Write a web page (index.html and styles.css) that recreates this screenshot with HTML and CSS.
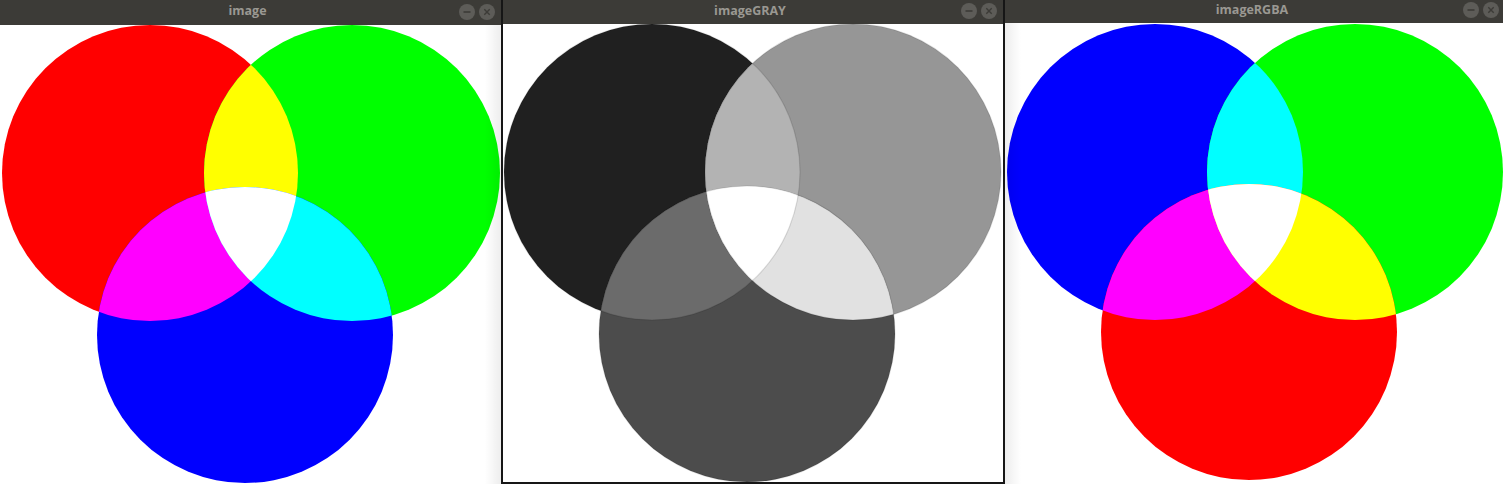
FILE: index.html
```html
<!DOCTYPE html>
<html>
<head>
<meta charset="utf-8">
<link rel="stylesheet" href="styles.css">
</head>
<body>
<div class="desktop">
  <div class="win win1">
    <div class="titlebar">
      <span class="title">image</span>
      <div class="btns">
        <svg class="btn" viewBox="0 0 16 16"><circle cx="8" cy="8" r="8" fill="#5d5c58"/><path d="M4.5 8h7" stroke="#3c3b37" stroke-width="1.6"/></svg>
        <svg class="btn" viewBox="0 0 16 16"><circle cx="8" cy="8" r="8" fill="#5d5c58"/><path d="M5.3 5.3l5.4 5.4M10.7 5.3l-5.4 5.4" stroke="#3c3b37" stroke-width="1.4"/></svg>
      </div>
    </div>
    <div class="content shade-right">
      <svg class="pic" width="501" height="459" viewBox="0 0 501 459">
        <defs>
          <clipPath id="a1"><circle cx="150" cy="148" r="148"/></clipPath>
          <clipPath id="b1"><circle cx="352" cy="148" r="148"/></clipPath>
        </defs>
        <circle cx="150" cy="148" r="148" fill="#ff0000"/>
        <circle cx="352" cy="148" r="148" fill="#00ff00"/>
        <circle cx="245" cy="310" r="148" fill="#0000ff"/>
        <circle cx="352" cy="148" r="148" fill="#ffff00" clip-path="url(#a1)"/>
        <circle cx="245" cy="310" r="148" fill="#ff00ff" clip-path="url(#a1)"/>
        <circle cx="245" cy="310" r="148" fill="#00ffff" clip-path="url(#b1)"/>
        <g clip-path="url(#a1)"><circle cx="245" cy="310" r="148" fill="#ffffff" clip-path="url(#b1)"/></g>
      </svg>
    </div>
  </div>

  <div class="win win2">
    <div class="titlebar">
      <span class="title">imageGRAY</span>
      <div class="btns">
        <svg class="btn" viewBox="0 0 16 16"><circle cx="8" cy="8" r="8" fill="#5d5c58"/><path d="M4.5 8h7" stroke="#3c3b37" stroke-width="1.6"/></svg>
        <svg class="btn" viewBox="0 0 16 16"><circle cx="8" cy="8" r="8" fill="#5d5c58"/><path d="M5.3 5.3l5.4 5.4M10.7 5.3l-5.4 5.4" stroke="#3c3b37" stroke-width="1.4"/></svg>
      </div>
    </div>
    <div class="content">
      <svg class="pic" width="500" height="458" viewBox="0 0 500 458">
        <defs>
          <clipPath id="a2"><circle cx="149" cy="148" r="148"/></clipPath>
          <clipPath id="b2"><circle cx="350" cy="148" r="148"/></clipPath>
        </defs>
        <circle cx="149" cy="148" r="148" fill="#202020"/>
        <circle cx="350" cy="148" r="148" fill="#969696"/>
        <circle cx="244" cy="310" r="148" fill="#4c4c4c"/>
        <circle cx="350" cy="148" r="148" fill="#b3b3b3" clip-path="url(#a2)"/>
        <circle cx="244" cy="310" r="148" fill="#6b6b6b" clip-path="url(#a2)"/>
        <circle cx="244" cy="310" r="148" fill="#e1e1e1" clip-path="url(#b2)"/>
        <g clip-path="url(#a2)"><circle cx="244" cy="310" r="148" fill="#ffffff" clip-path="url(#b2)"/></g>
        <g fill="none" stroke="rgba(0,0,0,0.12)" stroke-width="1.2">
          <circle cx="149" cy="148" r="148"/>
          <circle cx="350" cy="148" r="148"/>
          <circle cx="244" cy="310" r="148"/>
        </g>
      </svg>
    </div>
  </div>

  <div class="win win3">
    <div class="titlebar">
      <span class="title">imageRGBA</span>
      <div class="btns">
        <svg class="btn" viewBox="0 0 16 16"><circle cx="8" cy="8" r="8" fill="#5d5c58"/><path d="M4.5 8h7" stroke="#3c3b37" stroke-width="1.6"/></svg>
        <svg class="btn" viewBox="0 0 16 16"><circle cx="8" cy="8" r="8" fill="#5d5c58"/><path d="M5.3 5.3l5.4 5.4M10.7 5.3l-5.4 5.4" stroke="#3c3b37" stroke-width="1.4"/></svg>
      </div>
    </div>
    <div class="content shade-left">
      <svg class="pic" width="498" height="461" viewBox="0 0 498 461">
        <defs>
          <clipPath id="a3"><circle cx="150" cy="149" r="148"/></clipPath>
          <clipPath id="b3"><circle cx="350" cy="149" r="148"/></clipPath>
        </defs>
        <circle cx="150" cy="149" r="148" fill="#0000ff"/>
        <circle cx="350" cy="149" r="148" fill="#00ff00"/>
        <circle cx="244" cy="309" r="148" fill="#ff0000"/>
        <circle cx="350" cy="149" r="148" fill="#00ffff" clip-path="url(#a3)"/>
        <circle cx="244" cy="309" r="148" fill="#ff00ff" clip-path="url(#a3)"/>
        <circle cx="244" cy="309" r="148" fill="#ffff00" clip-path="url(#b3)"/>
        <g clip-path="url(#a3)"><circle cx="244" cy="309" r="148" fill="#ffffff" clip-path="url(#b3)"/></g>
      </svg>
    </div>
  </div>
</div>
</body>
</html>
```

FILE: styles.css
```css
* { box-sizing: border-box; }

html, body {
  margin: 0;
  padding: 0;
  background: #2a2a28;
  overflow: hidden;
}

.desktop {
  display: flex;
  width: 1503px;
  height: 484px;
}

.win {
  display: flex;
  flex-direction: column;
  height: 484px;
  background: #ffffff;
}

.win1 { width: 501px; }
.win2 {
  width: 504px;
  border: 2px solid #161616;
  border-top: none;
}
.win3 { width: 498px; }

.titlebar {
  position: relative;
  display: flex;
  align-items: center;
  justify-content: center;
  height: 25px;
  flex: 0 0 auto;
  background: #3c3b37;
  padding-right: 6px;
}
.win2 .titlebar { height: 24px; }
.win3 .titlebar { height: 23px; padding-right: 4px; }

.title {
  font-family: "Open Sans", "DejaVu Sans", sans-serif;
  font-weight: 700;
  font-size: 12.5px;
  color: #9a9892;
  letter-spacing: 0;
  line-height: 1;
  margin-top: -2px;
}

.btns {
  position: absolute;
  right: 6px;
  top: 4px;
  display: flex;
  gap: 4px;
}
.win2 .btns { top: 3px; }
.win3 .btns { right: 4px; top: 2px; }

.btn {
  width: 16px;
  height: 16px;
  display: block;
}

.content {
  position: relative;
  flex: 1 1 auto;
  overflow: hidden;
  background: #ffffff;
}

.pic { display: block; }

.shade-right::after,
.shade-left::before {
  content: "";
  position: absolute;
  top: 0;
  bottom: 0;
  width: 16px;
  pointer-events: none;
}
.shade-right::after {
  right: 0;
  background: linear-gradient(to right, rgba(0,0,0,0), rgba(0,0,0,0.07));
}
.shade-left::before {
  left: 0;
  background: linear-gradient(to left, rgba(0,0,0,0), rgba(0,0,0,0.07));
}
```
